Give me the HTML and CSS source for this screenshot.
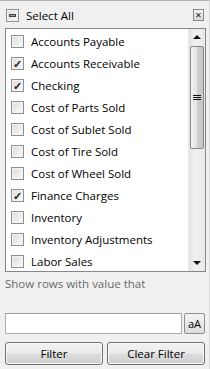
FILE: index.html
```html
<!DOCTYPE html>
<html lang="en">
<head>
    <meta charset="UTF-8">
    <title>Filter</title>
    <link rel="stylesheet" href="styles.css">
</head>
<body>
    <div class="panel">
        <div class="header">
            <span class="box partial"><i></i></span>
            <span class="label">Select All</span>
            <span class="close">&#215;</span>
        </div>
        <div class="list">
            <div class="items">
                <div class="row"><span class="box"></span>Accounts Payable</div>
                <div class="row"><span class="box checked">&#10003;</span>Accounts Receivable</div>
                <div class="row"><span class="box checked">&#10003;</span>Checking</div>
                <div class="row"><span class="box"></span>Cost of Parts Sold</div>
                <div class="row"><span class="box"></span>Cost of Sublet Sold</div>
                <div class="row"><span class="box"></span>Cost of Tire Sold</div>
                <div class="row"><span class="box"></span>Cost of Wheel Sold</div>
                <div class="row"><span class="box checked">&#10003;</span>Finance Charges</div>
                <div class="row"><span class="box"></span>Inventory</div>
                <div class="row"><span class="box"></span>Inventory Adjustments</div>
                <div class="row"><span class="box"></span>Labor Sales</div>
            </div>
            <div class="scrollbar">
                <div class="arrow up"></div>
                <div class="track">
                    <div class="thumb"><i></i><i></i><i></i></div>
                </div>
                <div class="arrow down"></div>
            </div>
        </div>
        <div class="hint"><span>Show rows with value that</span></div>
        <div class="search">
            <div class="input"></div>
            <div class="case">aA</div>
        </div>
        <div class="buttons">
            <div class="btn">Filter</div>
            <div class="btn">Clear Filter</div>
        </div>
    </div>
</body>
</html>
```

FILE: styles.css
```css
html, body {
    margin: 0;
    padding: 0;
}
body {
    font-family: "Open Sans", "Noto Sans", sans-serif;
    font-size: 11.5px;
    color: #000;
    background: #f0f0f0;
    width: 210px;
    height: 369px;
    overflow: hidden;
}
.panel {
    box-sizing: border-box;
    width: 210px;
    height: 369px;
    border-top: 1px solid #b4b4b4;
    border-right: 1px solid #d8d8d8;
    padding: 0 4px 0 5px;
}
.header {
    height: 27px;
    display: flex;
    align-items: center;
    padding-top: 2px;
    box-sizing: border-box;
    position: relative;
}
.header .box {
    margin-left: 1px;
    margin-right: 7px;
}
.header .label {
    font-size: 11.5px;
}
.box {
    box-sizing: border-box;
    width: 13px;
    height: 13px;
    border: 1px solid #8e8f8f;
    background: linear-gradient(135deg, #dcdcdc, #fbfbfb);
    box-shadow: inset 0 0 0 1px #f4f4f4;
    display: inline-flex;
    align-items: center;
    justify-content: center;
    flex-shrink: 0;
    font-size: 11px;
    line-height: 1;
    font-weight: bold;
    color: #222;
}
.box.partial i {
    width: 7px;
    height: 3px;
    border: 1px solid #444;
    background: #999;
    box-sizing: border-box;
}
.close {
    position: absolute;
    right: 1px;
    top: 8px;
    width: 11px;
    height: 12px;
    box-sizing: border-box;
    border: 1px solid #8a8a8a;
    background: linear-gradient(#f6f6f6, #d9d9d9);
    font-size: 11px;
    line-height: 9px;
    text-align: center;
    color: #111;
}
.list {
    box-sizing: border-box;
    width: 201px;
    height: 244px;
    border: 1px solid #828790;
    background: #fff;
    display: flex;
    overflow: hidden;
}
.items {
    flex: 1;
    padding-top: 1px;
    overflow: hidden;
}
.row {
    height: 22px;
    display: flex;
    align-items: center;
    padding-left: 5px;
    white-space: nowrap;
}
.row .box {
    margin-right: 7px;
}
.scrollbar {
    width: 16px;
    display: flex;
    flex-direction: column;
    border-left: 1px solid #e6e6e6;
    background: linear-gradient(90deg, #e3e3e3, #f1f1f1 40%, #e9e9e9);
}
.arrow {
    height: 16px;
    display: flex;
    align-items: center;
    justify-content: center;
}
.arrow::before {
    content: "";
    border-left: 4px solid transparent;
    border-right: 4px solid transparent;
}
.up::before {
    border-bottom: 4px solid #111;
}
.down::before {
    border-top: 4px solid #111;
}
.track {
    flex: 1;
    padding-top: 1px;
}
.thumb {
    box-sizing: border-box;
    margin-left: 1px;
    width: 14px;
    height: 103px;
    border: 1px solid #888;
    border-radius: 2px;
    background: linear-gradient(90deg, #f3f3f3, #e4e4e4 45%, #cfcfcf 55%, #c6c6c6);
    display: flex;
    flex-direction: column;
    align-items: center;
    justify-content: center;
    gap: 1px;
}
.thumb i {
    width: 8px;
    height: 1px;
    background: #111;
}
.hint {
    height: 11px;
    margin-top: 7px;
    overflow: hidden;
    color: #6a6a6a;
    font-size: 11.5px;
    white-space: nowrap;
}
.hint span {
    display: block;
    margin-top: -3px;
}
.search {
    display: flex;
    gap: 2px;
    margin-top: 23px;
    height: 21px;
}
.input {
    box-sizing: border-box;
    width: 178px;
    height: 21px;
    border: 1px solid #abadb3;
    border-top-color: #a0a0a0;
    background: #fff;
}
.case {
    box-sizing: border-box;
    width: 21px;
    height: 21px;
    border: 1px solid #8f8f8f;
    border-radius: 2px;
    background: linear-gradient(#f5f5f5, #dcdcdc);
    font-size: 11px;
    line-height: 19px;
    text-align: center;
}
.buttons {
    display: flex;
    gap: 4px;
    margin-top: 8px;
}
.btn {
    box-sizing: border-box;
    width: 98px;
    height: 23px;
    border: 1px solid #707070;
    border-radius: 3px;
    background: linear-gradient(#f2f2f2 0%, #ebebeb 48%, #dddddd 52%, #cfcfcf 100%);
    box-shadow: inset 0 0 0 1px #fafafa;
    text-align: center;
    line-height: 21px;
    font-size: 11.5px;
}
```
